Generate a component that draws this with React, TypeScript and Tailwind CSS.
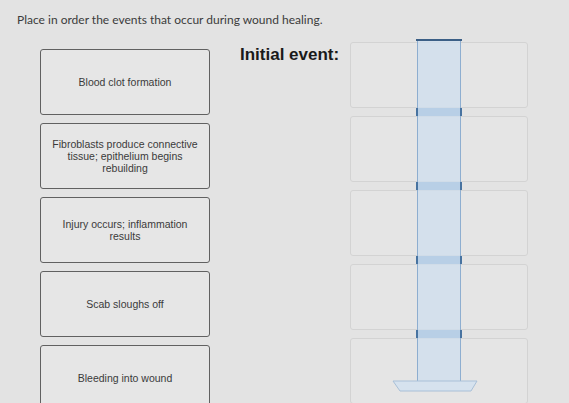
const choices: string[] = [
  "Blood clot formation",
  "Fibroblasts produce connective tissue; epithelium begins rebuilding",
  "Injury occurs; inflammation results",
  "Scab sloughs off",
  "Bleeding into wound",
];

// Down arrow running behind the ordered slots; darker bands show in the gaps between slots.
function OrderArrow() {
  const bands = [69, 143, 217, 291];
  return (
    <svg
      className="pointer-events-none absolute left-0 top-0"
      width="178"
      height="364"
      viewBox="0 0 178 364"
    >
      <rect x="67" y="0" width="44" height="342" fill="#cfdeee" fillOpacity="0.8" />
      <line x1="67.5" y1="0" x2="67.5" y2="342" stroke="#8eaed0" strokeWidth="1" />
      <line x1="110.5" y1="0" x2="110.5" y2="342" stroke="#8eaed0" strokeWidth="1" />
      <line x1="66" y1="1" x2="112" y2="1" stroke="#3b5f86" strokeWidth="2" />
      {bands.map((y) => (
        <g key={y}>
          <rect x="67" y={y} width="44" height="8" fill="#b8cfe6" />
          <rect x="66" y={y} width="2" height="8" fill="#4873a0" />
          <rect x="110" y={y} width="2" height="8" fill="#4873a0" />
        </g>
      ))}
      <polygon
        points="43,342 127,342 121,352 50,352"
        fill="#d6e2ee"
        stroke="#a9c0d8"
        strokeWidth="1"
      />
    </svg>
  );
}

export default function App() {
  return (
    <div className="h-[403px] w-[569px] overflow-hidden bg-[#e3e3e3] font-['Liberation_Sans',Arial,sans-serif]">
      <p className="pl-[17px] pt-[11px] font-['Lato',sans-serif] text-[12px] leading-[18px] text-[#3b3b3b]">
        Place in order the events that occur during wound healing.
      </p>

      <div className="mt-[10px] flex">
        <div className="ml-[40px] flex w-[170px] flex-col gap-[8px] pt-[10px]">
          {choices.map((text) => (
            <div
              key={text}
              className="flex h-[66px] shrink-0 items-center justify-center rounded-[3px] border border-[#616161] bg-[#e6e6e6] px-[10px] text-center text-[10.5px] leading-[12px] text-[#3a3a3a]"
            >
              {text}
            </div>
          ))}
        </div>

        <div className="ml-[30px] w-[110px] pt-[6px] text-[17px] font-bold leading-[20px] text-[#1a1a1a]">
          Initial event:
        </div>

        <div className="relative w-[178px]">
          <div className="flex flex-col gap-[8px] pt-[3px]">
            {[0, 1, 2, 3, 4].map((i) => (
              <div
                key={i}
                className="h-[66px] shrink-0 rounded-[3px] border border-[#d3d3d3] bg-[#e5e5e5]"
              />
            ))}
          </div>
          <OrderArrow />
        </div>
      </div>
    </div>
  );
}
